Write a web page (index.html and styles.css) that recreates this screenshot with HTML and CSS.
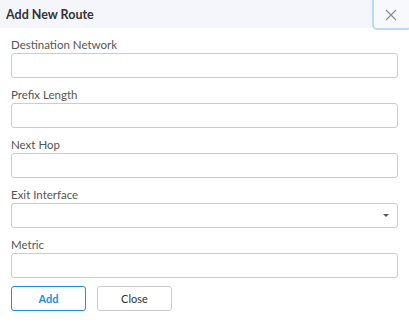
FILE: index.html
```html
<!DOCTYPE html>
<html lang="en">
<head>
  <meta charset="UTF-8">
  <title>Add New Route</title>
  <link rel="stylesheet" href="styles.css">
</head>
<body>
  <div class="modal">
    <div class="modal-header">
      <span class="modal-title">Add New Route</span>
      <button class="close-x" aria-label="Close">
        <svg width="12" height="12" viewBox="0 0 12 12"><path d="M1 1L11 11M11 1L1 11" stroke="#8a8a8a" stroke-width="1.1" fill="none"/></svg>
      </button>
    </div>
    <form class="modal-body">
      <div class="field">
        <label>Destination Network</label>
        <input type="text" class="input">
      </div>
      <div class="field">
        <label>Prefix Length</label>
        <input type="text" class="input">
      </div>
      <div class="field">
        <label>Next Hop</label>
        <input type="text" class="input">
      </div>
      <div class="field">
        <label>Exit Interface</label>
        <div class="input select">
          <span class="caret"></span>
        </div>
      </div>
      <div class="field">
        <label>Metric</label>
        <input type="text" class="input">
      </div>
      <div class="actions">
        <button type="button" class="btn btn-primary">Add</button>
        <button type="button" class="btn">Close</button>
      </div>
    </form>
  </div>
</body>
</html>
```

FILE: styles.css
```css
body {
  margin: 0;
  font-family: 'Lato', 'Liberation Sans', sans-serif;
  background-color: #fff;
  color: #333;
  overflow: hidden;
}
.modal {
  width: 409px;
  overflow: hidden;
}
.modal-header {
  display: flex;
  align-items: center;
  justify-content: space-between;
  height: 28px;
  background-color: #f4f6fc;
  padding-left: 6px;
}
.modal-title {
  font-size: 12.5px;
  font-weight: bold;
  color: #333;
}
.close-x {
  align-self: flex-start;
  width: 40px;
  height: 34px;
  margin-top: -4px;
  margin-right: -3px;
  border: 2px solid #bcd9f7;
  border-radius: 5px;
  background-color: #f7f9fd;
  display: flex;
  align-items: center;
  justify-content: center;
  padding: 3px 3px 0 0;
  box-sizing: border-box;
}
.modal-body {
  padding: 8px 11px 0 11px;
}
.field {
  margin-bottom: 8px;
}
.field label {
  display: block;
  font-size: 11.5px;
  color: #555;
  height: 17px;
  line-height: 17px;
}
.input {
  display: block;
  box-sizing: border-box;
  width: 387px;
  height: 25px;
  border: 1px solid #ccc;
  border-radius: 3px;
  background: #fff;
  margin: 0;
}
.select {
  position: relative;
}
.caret {
  position: absolute;
  right: 8px;
  top: 10px;
  width: 0;
  height: 0;
  border-left: 3px solid transparent;
  border-right: 3px solid transparent;
  border-top: 3px solid #555;
}
.actions {
  display: flex;
  gap: 11px;
  margin-top: 1px;
}
.btn {
  width: 75px;
  height: 25px;
  border: 1px solid #ccc;
  border-radius: 3px;
  background: #fff;
  font-family: inherit;
  font-size: 11px;
  color: #333;
  padding: 0;
}
.btn-primary {
  border-color: #1b8fe0;
  color: #1b8fe0;
  font-weight: bold;
}
```
